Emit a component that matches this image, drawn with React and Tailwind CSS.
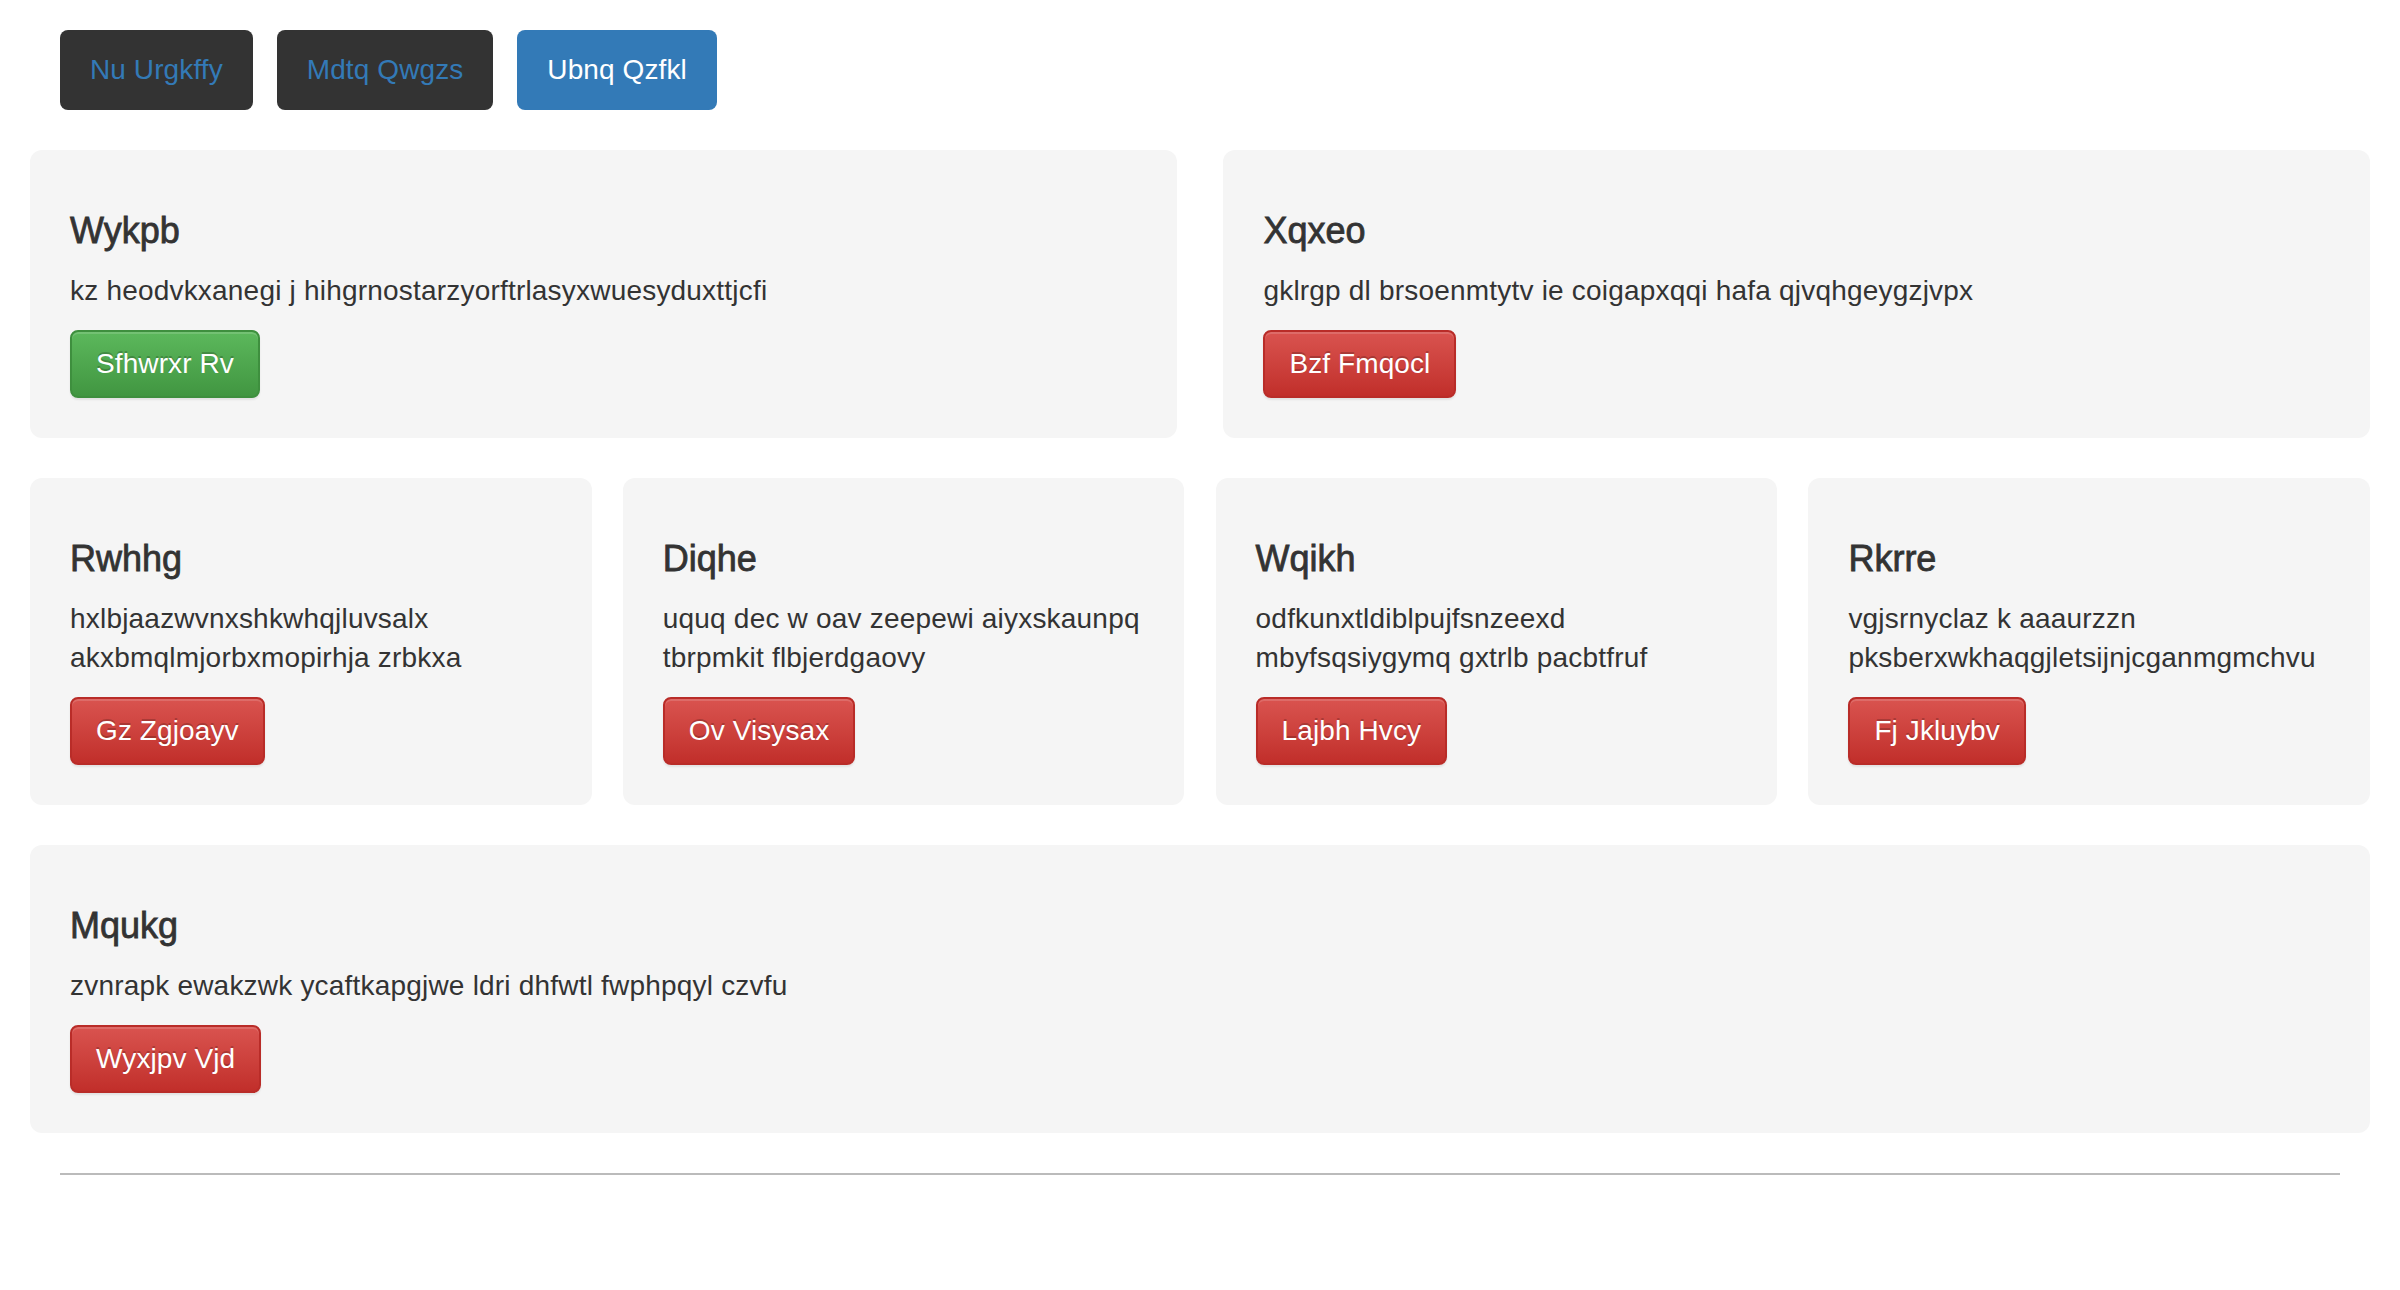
const tabs = [
  { label: 'Nu Urgkffy', active: false },
  { label: 'Mdtq Qwgzs', active: false },
  { label: 'Ubnq Qzfkl', active: true },
]

const rows = [
  {
    width: 'w-[49%]',
    cards: [
      { title: 'Wykpb', text: 'kz heodvkxanegi j hihgrnostarzyorftrlasyxwuesyduxttjcfi', button: 'Sfhwrxr Rv', variant: 'success' },
      { title: 'Xqxeo', text: 'gklrgp dl brsoenmtytv ie coigapxqqi hafa qjvqhgeygzjvpx', button: 'Bzf Fmqocl', variant: 'danger' },
    ],
  },
  {
    width: 'w-[24%]',
    cards: [
      { title: 'Rwhhg', text: 'hxlbjaazwvnxshkwhqjluvsalx akxbmqlmjorbxmopirhja zrbkxa', button: 'Gz Zgjoayv', variant: 'danger' },
      { title: 'Diqhe', text: 'uquq dec w oav zeepewi aiyxskaunpq tbrpmkit flbjerdgaovy', button: 'Ov Visysax', variant: 'danger' },
      { title: 'Wqikh', text: 'odfkunxtldiblpujfsnzeexd mbyfsqsiygymq gxtrlb pacbtfruf', button: 'Lajbh Hvcy', variant: 'danger' },
      { title: 'Rkrre', text: 'vgjsrnyclaz k aaaurzzn pksberxwkhaqgjletsijnjcganmgmchvu', button: 'Fj Jkluybv', variant: 'danger' },
    ],
  },
  {
    width: 'w-full',
    cards: [
      { title: 'Mqukg', text: 'zvnrapk ewakzwk ycaftkapgjwe ldri dhfwtl fwphpqyl czvfu', button: 'Wyxjpv Vjd', variant: 'danger' },
    ],
  },
]

const ActionButton = ({ label, variant }) => {
  const colors =
    variant === 'success'
      ? 'from-[#5cb85c] to-[#419641] border-[#3e8f3e]'
      : 'from-[#d9534f] to-[#c12e2a] border-[#b92c28]'
  return (
    <button
      className={`bg-linear-to-b ${colors} border-2 rounded-[8px] px-[24px] py-[12px] text-[28px] leading-[40px] tracking-[0.1px] text-white [text-shadow:0_-2px_0_rgba(0,0,0,0.2)] shadow-[inset_0_2px_0_rgba(255,255,255,0.15),0_2px_2px_rgba(0,0,0,0.075)]`}
    >
      {label}
    </button>
  )
}

const Card = ({ card, width }) => (
  <div className={`${width} bg-[#f5f5f5] rounded-[12px] p-[40px]`}>
    <h4 className="mt-[20px] mb-[20px] text-[36px] leading-[41px] font-normal text-[#333] [-webkit-text-stroke:0.8px_#333]">
      {card.title}
    </h4>
    <p className="mb-[20px] text-[28px] leading-[39px] tracking-[0.2px] text-[#333]">{card.text}</p>
    <ActionButton label={card.button} variant={card.variant} />
  </div>
)

const App = () => {
  return (
    <div className="min-h-screen bg-white px-[30px] pt-[30px] font-['Liberation_Sans',Arial,sans-serif]">
      <div className="flex gap-[24px] px-[30px]">
        {tabs.map((tab) => (
          <button
            key={tab.label}
            className={`rounded-[8px] px-[30px] py-[20px] text-[28px] leading-[40px] tracking-[0.1px] ${
              tab.active ? 'bg-[#337ab7] text-white' : 'bg-[#333333] text-[#337ab7]'
            }`}
          >
            {tab.label}
          </button>
        ))}
      </div>

      <div className="mt-[40px] flex flex-col gap-[40px]">
        {rows.map((row, i) => (
          <div key={i} className="flex justify-between">
            {row.cards.map((card) => (
              <Card key={card.title} card={card} width={row.width} />
            ))}
          </div>
        ))}
      </div>

      <hr className="mx-[30px] mt-[40px] border-0 border-t-2 border-[#bbbbbb]" />
    </div>
  )
}

export default App
